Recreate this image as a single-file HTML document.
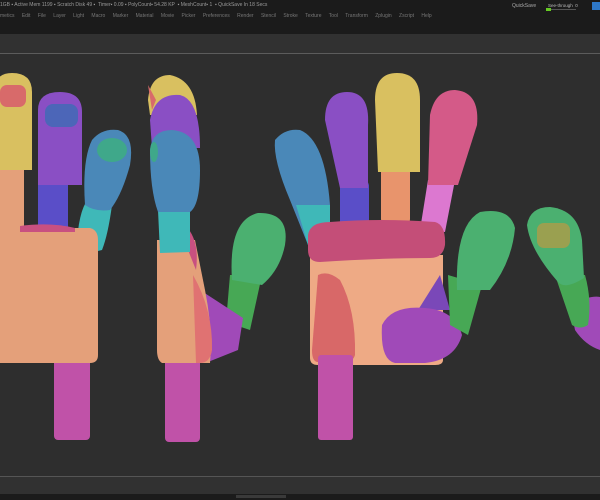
<!DOCTYPE html>
<html><head><meta charset="utf-8">
<style>
html,body{margin:0;padding:0;width:600px;height:500px;overflow:hidden;background:#2e2e2e;font-family:"Liberation Sans",sans-serif}
.top{position:absolute;left:0;top:0;width:600px;height:34px;background:#1b1b1b}
.status{position:absolute;left:0;top:2px;font-size:5px;color:#9a9a9a;white-space:nowrap}
.menu{position:absolute;left:0;top:13px;font-size:5px;color:#777;white-space:nowrap;word-spacing:6px}
.bar2{position:absolute;left:0;top:34px;width:600px;height:19px;background:#313131}
.line{position:absolute;left:0;width:600px;height:1px;background:#5c5c5c}
.bar3{position:absolute;left:0;top:477px;width:600px;height:17px;background:#313131}
.bot{position:absolute;left:0;top:494px;width:600px;height:6px;background:#1b1b1b}
</style></head><body>
<div class="top">
<div class="status">1GB ▪ Active Mem 1199 ▪ Scratch Disk 49 ▪ &nbsp;Timer▪ 0.09 ▪ PolyCount▪ 54.28 KP &nbsp;▪ MeshCount▪ 1 &nbsp;▪ QuickSave In 18 Secs</div>
<div class="menu">metics Edit File Layer Light Macro Marker Material Movie Picker Preferences Render Stencil Stroke Texture Tool Transform Zplugin Zscript Help</div>
<div style="position:absolute;left:512px;top:3px;font-size:5px;color:#aaa">QuickSave</div>
<div style="position:absolute;left:548px;top:3px;font-size:4.5px;color:#bbb">See-through &nbsp;0</div>
<div style="position:absolute;left:546px;top:9px;width:30px;height:1px;background:#555"></div>
<div style="position:absolute;left:546px;top:8px;width:5px;height:3px;background:#6c2"></div>
<div style="position:absolute;left:592px;top:2px;width:8px;height:8px;background:#2e78c8"></div>
</div>
<div class="bar2"></div>
<div class="line" style="top:53px"></div>
<div class="line" style="top:476px;background:#555"></div>
<div class="bar3"></div>
<div class="bot"><div style="position:absolute;left:236px;top:1px;width:50px;height:3px;background:#3a3a3a"></div></div>
<svg style="position:absolute;left:0;top:54px" width="600" height="422" viewBox="0 54 600 422">
<defs><linearGradient id="sh" x1="0" x2="1" y1="0" y2="0"><stop offset="0" stop-color="#fff" stop-opacity="0.08"/><stop offset="1" stop-color="#000" stop-opacity="0.12"/></linearGradient></defs>
<!-- Hand 1 -->
<rect x="54" y="355" width="36" height="85" rx="4" fill="#c052a8"/>
<rect x="-3" y="150" width="27" height="88" rx="12" fill="#e4a07a"/>
<path d="M-5 170 V90 Q-5 73 12 73 Q32 73 32 92 V170 Z" fill="#d9c060"/>
<rect x="0" y="85" width="26" height="22" rx="7" fill="#d86a6a"/>
<rect x="38" y="165" width="30" height="77" rx="13" fill="#5a4ec8"/>
<path d="M38 185 V110 Q38 92 60 92 Q82 92 82 112 V185 Z" fill="#8a4fc4"/>
<rect x="45" y="104" width="33" height="23" rx="8" fill="#4c66b8"/>
<path d="M77 240 Q80 205 90 198 L112 205 Q108 235 102 250 Q85 255 77 240Z" fill="#3fb8b8"/>
<path d="M85 205 Q82 160 92 140 Q102 128 118 130 Q135 135 130 165 Q122 195 110 210 Q95 212 85 205Z" fill="#4a88b8"/>
<ellipse cx="112" cy="150" rx="15" ry="12" fill="#3fa88a"/>
<path d="M-5 228 H90 Q98 230 98 240 V355 Q98 363 90 363 H-5 Z" fill="#e4a07a"/>
<path d="M20 226 Q50 222 75 228 L75 232 L20 232Z" fill="#c85080"/>
<!-- Hand 2 -->
<rect x="165" y="355" width="35" height="87" rx="4" fill="#c052a8"/>
<path d="M148 100 Q150 75 170 75 Q195 80 197 115 H150 Z" fill="#d9c060"/>
<path d="M148 85 L152 110 L156 100 Z" fill="#d86a6a"/>
<path d="M150 120 Q155 93 180 95 Q200 100 200 148 H152 Z" fill="#8a4fc4"/>
<path d="M230 275 L262 275 L250 330 L226 322 Z" fill="#47a855"/>
<path d="M232 280 Q228 220 258 213 Q290 212 285 245 Q280 270 262 285 Z" fill="#4bb070"/>
<path d="M200 290 L243 318 L238 350 L208 362 Z" fill="#a04ab8"/>
<path d="M157 240 H195 L205 290 Q213 330 210 363 H162 Q157 360 157 350 Z" fill="#e4a07a"/>
<path d="M193 275 Q213 310 212 350 Q210 363 200 363 L196 363 Z" fill="#e07272"/>
<path d="M185 225 Q200 240 196 270 L188 250 Z" fill="#c85080"/>
<path d="M158 210 H190 V252 L160 253 Z" fill="#3fb8b8"/>
<path d="M150 150 Q152 130 172 130 Q200 132 200 170 Q200 205 190 212 H158 Q150 190 150 150Z" fill="#4a88b8"/>
<ellipse cx="154" cy="152" rx="4" ry="10" fill="#3fa88a"/>
<!-- Hand 3 -->
<path d="M275 140 Q285 128 300 130 Q325 140 330 205 L330 245 H308 L290 200 Q273 160 275 140Z" fill="#4a88b8"/>
<path d="M296 205 H330 V245 H308 Z" fill="#3fb8b8"/>
<rect x="340" y="180" width="29" height="50" rx="6" fill="#5a4ec8"/>
<path d="M325 120 Q325 92 347 92 Q370 92 368 125 L368 188 H340 Z" fill="#8a4fc4"/>
<rect x="381" y="165" width="29" height="60" rx="6" fill="#e8946c"/>
<path d="M375 100 Q375 73 397 73 Q420 73 420 100 V172 H378 Z" fill="#d9c060"/>
<path d="M420 230 L428 180 H455 L445 232 Z" fill="#dc78d0"/>
<path d="M428 185 L430 115 Q435 90 455 90 Q480 92 477 125 L458 185 Z" fill="#d45a88"/>
<path d="M310 255 H443 V360 Q443 365 435 365 H318 Q310 365 310 358 Z" fill="#eeaa85"/>
<path d="M308 235 Q310 222 330 222 Q380 218 435 222 Q446 225 445 245 Q443 258 430 258 Q380 258 320 262 Q308 262 308 250Z" fill="#c44e78"/>
<path d="M318 275 Q328 270 340 280 Q356 310 355 355 Q353 362 345 362 H318 Q312 362 312 350 Z" fill="#d86868"/>
<path d="M418 310 L440 275 L450 310 Z" fill="#7a48b8"/>
<path d="M382 325 Q392 305 425 308 Q455 310 462 335 Q455 360 425 363 H395 Q380 360 382 325Z" fill="#a04ab8"/>
<path d="M448 275 L482 285 L468 335 L450 325 Z" fill="#47a855"/>
<path d="M457 290 Q455 225 480 212 Q510 207 515 228 Q512 262 490 290 Z" fill="#4bb070"/>
<rect x="318" y="355" width="35" height="85" rx="3" fill="#c052a8"/>
<!-- Hand 4 -->
<path d="M570 305 Q590 295 600 297 V350 Q585 345 575 330 Z" fill="#a04ab8"/>
<path d="M555 275 H585 Q592 300 588 325 Q580 330 572 325 Z" fill="#47a855"/>
<path d="M527 225 Q530 207 550 207 Q578 210 582 240 L584 278 Q565 290 558 282 Q530 250 527 225Z" fill="#4bb070"/>
<rect x="537" y="223" width="33" height="25" rx="7" fill="#9aa050"/>
<rect x="0" y="70" width="520" height="380" fill="url(#sh)" style="mix-blend-mode:soft-light" opacity="0"/>
</svg>
</body></html>
